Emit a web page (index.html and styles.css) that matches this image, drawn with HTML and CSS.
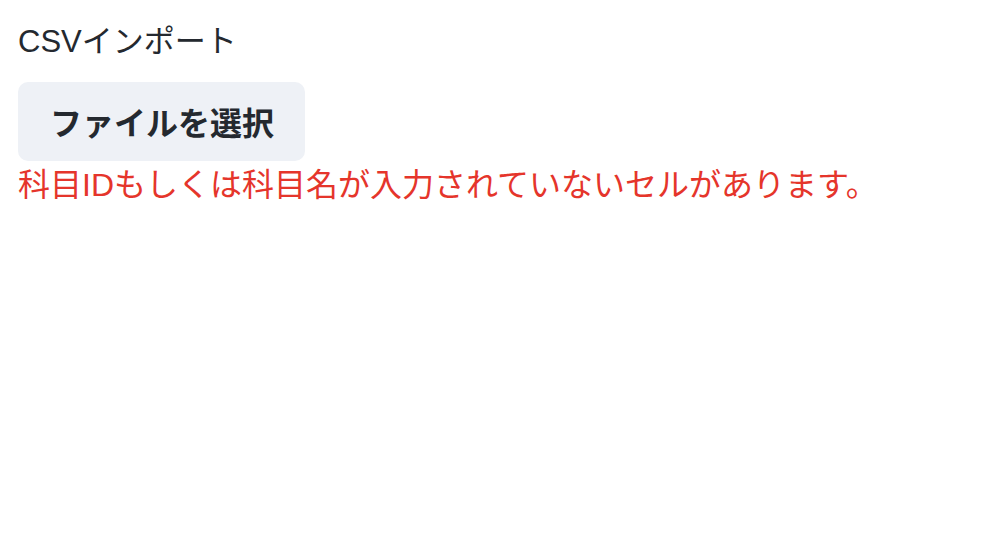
FILE: index.html
```html
<!DOCTYPE html>
<html lang="ja">
<head>
<meta charset="utf-8">
<link rel="stylesheet" href="styles.css">
</head>
<body>
<div class="page">
  <div class="title">CSVインポート</div>
  <button class="file-btn" type="button">ファイルを選択</button>
  <div class="error">科目IDもしくは科目名が入力されていないセルがあります。</div>
</div>
</body>
</html>
```
FILE: styles.css
```css
html, body {
  margin: 0;
  padding: 0;
  background: #ffffff;
}
.page {
  padding: 18px;
  display: flex;
  flex-direction: column;
  align-items: flex-start;
  font-family: "Liberation Sans", "Noto Sans CJK JP", sans-serif;
  font-size: 32px;
  line-height: 48px;
}
.title {
  color: #24292f;
  font-size: 31px;
}
.file-btn {
  margin-top: 16px;
  font-family: "Noto Sans CJK JP", sans-serif;
  font-size: 32px;
  line-height: 48px;
  font-weight: 700;
  color: #24292f;
  background: #eef1f6;
  border: none;
  border-radius: 10px;
  padding: 15px 31px 16px 32px;
}
.error {
  color: #e5352b;
}
```
